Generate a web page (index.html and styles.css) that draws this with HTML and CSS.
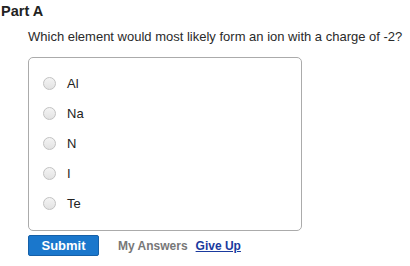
FILE: index.html
```html
<!DOCTYPE html>
<html>
<head>
<meta charset="utf-8">
<link rel="stylesheet" href="styles.css">
</head>
<body>
<div class="page">
  <h2 class="part-title">Part A</h2>
  <div class="question">
    <p class="prompt">Which element would most likely form an ion with a charge of -2?</p>
    <div class="choices">
      <label class="choice"><span class="radio"></span><span class="label">Al</span></label>
      <label class="choice"><span class="radio"></span><span class="label">Na</span></label>
      <label class="choice"><span class="radio"></span><span class="label">N</span></label>
      <label class="choice"><span class="radio"></span><span class="label">I</span></label>
      <label class="choice"><span class="radio"></span><span class="label">Te</span></label>
    </div>
    <div class="actions">
      <button class="submit">Submit</button>
      <span class="my-answers">My Answers</span>
      <a class="give-up" href="#">Give Up</a>
    </div>
  </div>
</div>
</body>
</html>
```
FILE: styles.css
```css
html, body {
  margin: 0;
  padding: 0;
  background: #ffffff;
}
body {
  font-family: "Liberation Sans", Arial, sans-serif;
  color: #222;
}
.page {
  padding: 3px 0 0 1px;
}
.part-title {
  margin: 0;
  font-size: 14.5px;
  line-height: 16px;
  font-weight: bold;
  color: #222;
}
.question {
  margin-left: 27px;
}
.prompt {
  margin: 10px 0 0 0;
  font-size: 13px;
  line-height: 16px;
  color: #2a2a2a;
}
.choices {
  margin-top: 12px;
  width: 272px;
  border: 1px solid #ababab;
  border-radius: 5px;
  padding: 10px 0 12px 0;
  display: flex;
  flex-direction: column;
}
.choice {
  height: 30px;
  display: flex;
  align-items: center;
  padding-left: 14px;
  font-size: 13px;
  color: #222;
}
.radio {
  width: 11px;
  height: 11px;
  border: 1px solid #c2c2c2;
  border-radius: 50%;
  background: linear-gradient(#f4f4f4, #e2e2e2);
  margin-right: 11px;
  flex: none;
}
.actions {
  margin-top: 4px;
  display: flex;
  align-items: center;
  height: 21px;
}
.submit {
  width: 71px;
  height: 21px;
  margin: 0;
  padding: 0;
  background: #1a77cc;
  border: 1px solid #1560a8;
  border-radius: 2px;
  color: #fff;
  font-family: "Liberation Sans", Arial, sans-serif;
  font-size: 13px;
  font-weight: bold;
}
.my-answers {
  margin-left: 19px;
  font-size: 12px;
  font-weight: bold;
  color: #777;
}
.give-up {
  margin-left: 8px;
  font-size: 12px;
  font-weight: bold;
  color: #1a3a9e;
  text-decoration: underline;
}
```
